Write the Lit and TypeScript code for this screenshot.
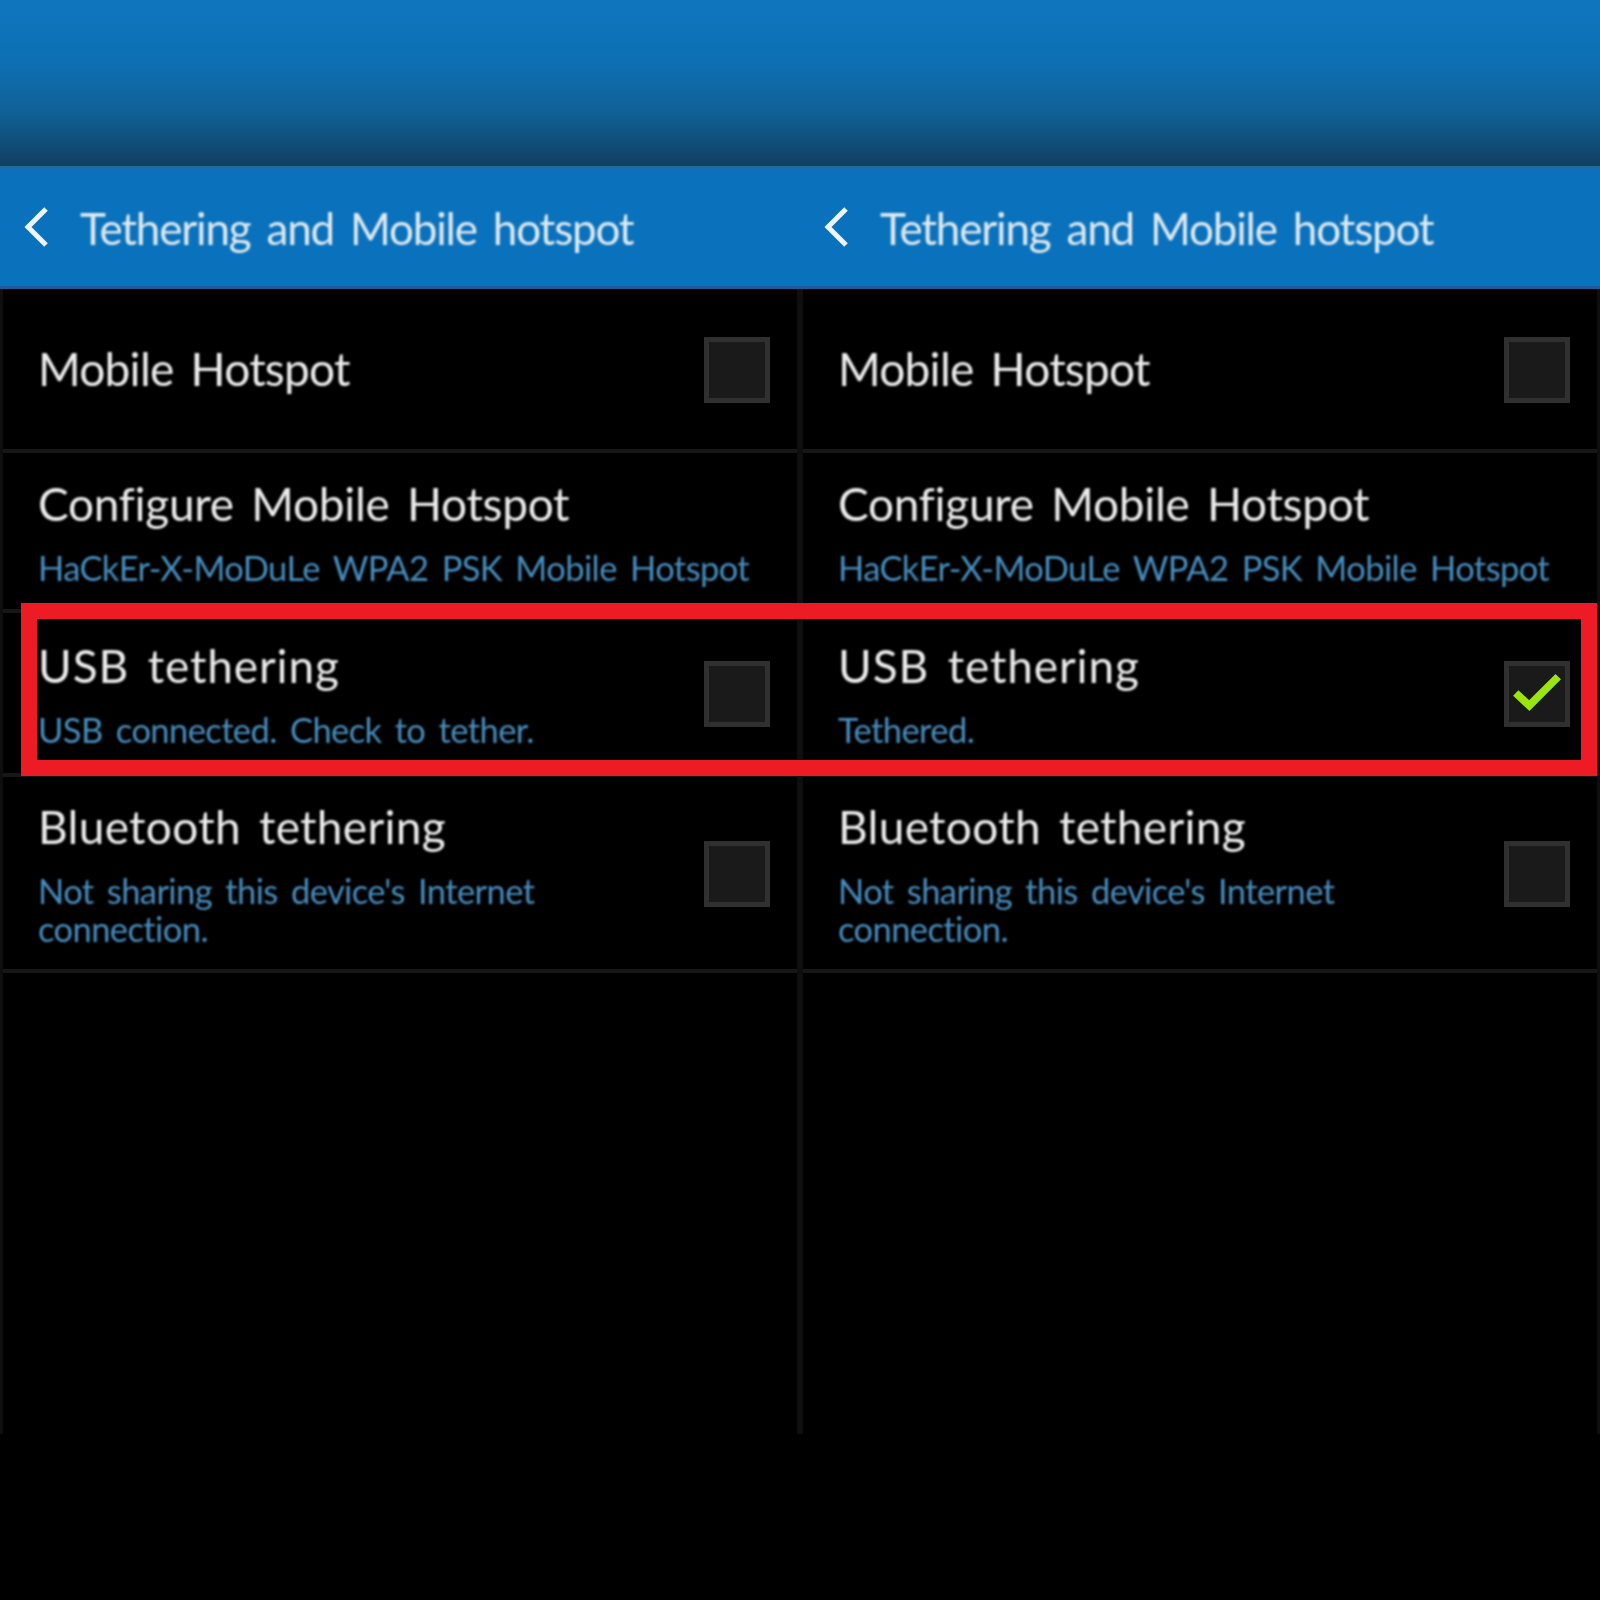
import { LitElement, html, css } from "lit";
import { customElement } from "lit/decorators.js";

interface Row { title: string; sub?: string[]; checked?: boolean; box: boolean; cls: string; }

const rows = (on: boolean): Row[] => [
  { title: "Mobile Hotspot", box: true, cls: "r1" },
  { title: "Configure Mobile Hotspot", sub: ["HaCkEr-X-MoDuLe WPA2 PSK Mobile Hotspot"], box: false, cls: "r2" },
  { title: "USB tethering", sub: [on ? "Tethered." : "USB connected. Check to tether."], checked: on, box: true, cls: "r3" },
  { title: "Bluetooth tethering", sub: ["Not sharing this device's Internet", "connection."], box: true, cls: "r4" },
];

@customElement("app-root")
export class AppRoot extends LitElement {
  static styles = css`
    :host { display: block; width: 1600px; height: 1600px; background: #000; position: relative; overflow: hidden;
      font-family: "Lato", "Liberation Sans", sans-serif; }
    .status { height: 166px; background: linear-gradient(#0f76be 0, #0e70b4 60px, #0f6298 110px, #10507c 140px, #113f60 166px); }
    .panes { display: flex; height: 1268px; }
    .pane { width: 800px; box-sizing: border-box; border-left: 3px solid #0e0e0e; border-right: 3px solid #0e0e0e; display: flex; flex-direction: column; margin: 0; }
    .bar { margin: 0 -3px; height: 123px; box-sizing: border-box; background: #0a72bd; border-top: 3px solid #1a6ca6; border-bottom: 3px solid #1d5c98;
      display: flex; align-items: center; padding-left: 23px; gap: 31px; color: #dfe9ef; }
    .bar svg { width: 26px; height: 44px; flex: none; margin-top: -2px; filter: blur(.6px); }
    .bar span { font-size: 44px; font-weight: 400; letter-spacing: -1.2px; word-spacing: 6px; filter: blur(.8px); white-space: nowrap; }
    .row { box-sizing: border-box; border-bottom: 4px solid #171717; display: flex; align-items: center; padding: 0 27px 0 35px; }
    .r1 { height: 164px; }
    .r2 { height: 160px; }
    .r3 { height: 164px; }
    .r4 { height: 196px; }
    .text { flex: 1; min-width: 0; }
    .title { font-size: 46px; font-weight: 400; line-height: 56px; color: #ececec; word-spacing: 6px; filter: blur(.8px); white-space: nowrap; }
    .r1 .title { letter-spacing: -0.75px; }
    .r2 .title { letter-spacing: -0.3px; }
    .r3 .title { letter-spacing: 0.85px; }
    .r4 .title { letter-spacing: 0.3px; }
    .sub { font-size: 34.5px; font-weight: 400; line-height: 38px; color: #478ebf; letter-spacing: -0.6px; word-spacing: 5px; filter: blur(.8px); white-space: nowrap; }
    .title + .sub { margin-top: 17px; }
    .box { width: 66px; height: 66px; box-sizing: border-box; background: #1a1a1a; border: 5px solid #303030; flex: none; display: flex; align-items: center; justify-content: center; filter: blur(.5px); margin-top: 1px; }
    .box svg { width: 56px; height: 56px; display: block; }
    .frame { position: absolute; left: 21px; top: 603px; width: 1576px; height: 173px; box-sizing: border-box; border: 16px solid #ed1c24; }
  `;

  private pane(on: boolean) {
    return html`<section class="pane">
      <div class="bar">
        <svg viewBox="0 0 26 44"><path d="M23 4 L5 22 L23 40" fill="none" stroke="#eef4f8" stroke-width="5"/></svg>
        <span>Tethering and Mobile hotspot</span>
      </div>
      ${rows(on).map((r) => html`<div class="row ${r.cls}">
        <div class="text">
          <div class="title">${r.title}</div>
          ${(r.sub ?? []).map((s) => html`<div class="sub">${s}</div>`)}
        </div>
        ${r.box ? html`<div class="box">${r.checked
          ? html`<svg viewBox="0 0 58 58"><path d="M7 28 L21 41 L51 11" fill="none" stroke="#9be60a" stroke-width="8"/></svg>`
          : ""}</div>` : ""}
      </div>`)}
    </section>`;
  }

  render() {
    return html`
      <div class="status"></div>
      <div class="panes">${this.pane(false)}${this.pane(true)}</div>
      <div class="frame"></div>
    `;
  }
}
